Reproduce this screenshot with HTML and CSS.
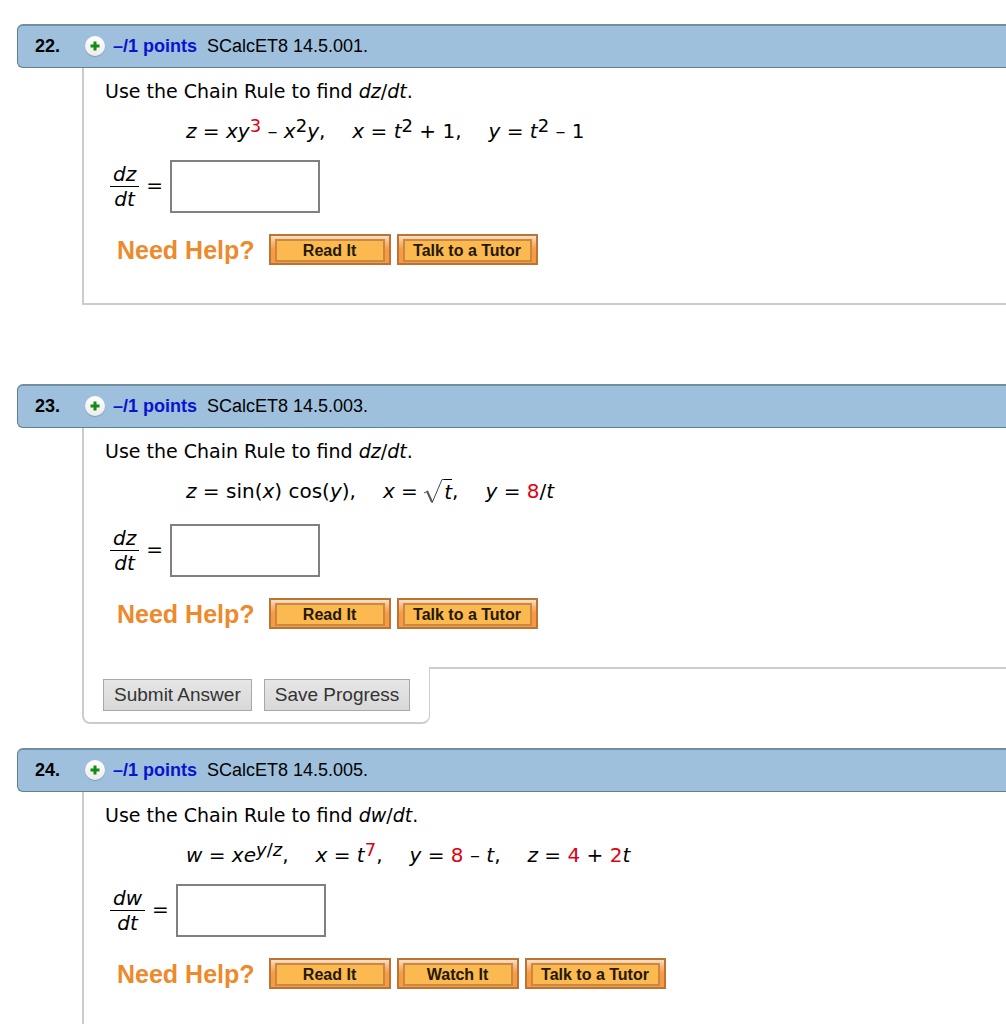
FILE: index.html
```html
<!DOCTYPE html>
<html lang="en">
<head>
  <meta charset="utf-8">
  <title>Homework 14.5</title>
  <link rel="stylesheet" href="styles.css">
</head>
<body>
  <div class="question">
    <div class="bar">
      <span class="number">22.</span>
      <button class="plus" type="button" aria-label="Expand question 22">
        <svg width="20" height="20" viewBox="0 0 20 20"><path d="M10 5.5v9M5.5 10h9" stroke="#168a16" stroke-width="3"/></svg>
      </button>
      <a class="points" href="#">–/1 points</a>
      <span class="source">SCalcET8 14.5.001.</span>
    </div>
    <div class="content">
      <p class="prompt">Use the Chain Rule to find <i>dz</i>/<i>dt</i>.</p>
      <div class="formula">
        <span><i>z</i> = <i>xy</i><sup class="red">3</sup> – <i>x</i><sup>2</sup><i>y</i>,</span>
        <span><i>x</i> = <i>t</i><sup>2</sup> + 1,</span>
        <span><i>y</i> = <i>t</i><sup>2</sup> – 1</span>
      </div>
      <div class="answer">
        <label class="fraction" for="answer22"><i class="top">dz</i><i>dt</i></label>
        <span class="equals">=</span>
        <input id="answer22" type="text">
      </div>
      <div class="help">
        <span class="help-title">Need Help?</span>
        <button class="help-button" type="button"><span>Read It</span></button>
        <button class="help-button wide" type="button"><span>Talk to a Tutor</span></button>
      </div>
    </div>
    <div class="bottom-line"></div>
  </div>

  <div class="question submit-question">
    <div class="bar">
      <span class="number">23.</span>
      <button class="plus" type="button" aria-label="Expand question 23">
        <svg width="20" height="20" viewBox="0 0 20 20"><path d="M10 5.5v9M5.5 10h9" stroke="#168a16" stroke-width="3"/></svg>
      </button>
      <a class="points" href="#">–/1 points</a>
      <span class="source">SCalcET8 14.5.003.</span>
    </div>
    <div class="content">
      <p class="prompt">Use the Chain Rule to find <i>dz</i>/<i>dt</i>.</p>
      <div class="formula tall">
        <span><i>z</i> = sin(<i>x</i>) cos(<i>y</i>),</span>
        <span><i>x</i> = <span class="root"><svg width="20" height="25" viewBox="0 0 20 25"><path d="M0 14l4-2" stroke="#555" fill="none"/><path d="M3 12l5 11" stroke="#555" stroke-width="2" fill="none"/><path d="M8 24L18 .5h2" stroke="#444" fill="none"/></svg><i class="radicand">t</i></span>,</span>
        <span><i>y</i> = <span class="red">8</span>/<i>t</i></span>
      </div>
      <div class="answer">
        <label class="fraction" for="answer23"><i class="top">dz</i><i>dt</i></label>
        <span class="equals">=</span>
        <input id="answer23" type="text">
      </div>
      <div class="help">
        <span class="help-title">Need Help?</span>
        <button class="help-button" type="button"><span>Read It</span></button>
        <button class="help-button wide" type="button"><span>Talk to a Tutor</span></button>
      </div>
    </div>
    <div class="submit-row">
      <div class="tab">
        <button class="submit" type="submit">Submit Answer</button>
        <button class="submit" type="button">Save Progress</button>
      </div>
      <div class="line"></div>
    </div>
  </div>

  <div class="question last">
    <div class="bar">
      <span class="number">24.</span>
      <button class="plus" type="button" aria-label="Expand question 24">
        <svg width="20" height="20" viewBox="0 0 20 20"><path d="M10 5.5v9M5.5 10h9" stroke="#168a16" stroke-width="3"/></svg>
      </button>
      <a class="points" href="#">–/1 points</a>
      <span class="source">SCalcET8 14.5.005.</span>
    </div>
    <div class="content">
      <p class="prompt">Use the Chain Rule to find <i>dw</i>/<i>dt</i>.</p>
      <div class="formula">
        <span><i>w</i> = <i>xe</i><sup><i>y</i>/<i>z</i></sup>,</span>
        <span><i>x</i> = <i>t</i><sup class="red">7</sup>,</span>
        <span><i>y</i> = <span class="red">8</span> – <i>t</i>,</span>
        <span><i>z</i> = <span class="red">4</span> + <span class="red">2</span><i>t</i></span>
      </div>
      <div class="answer">
        <label class="fraction" for="answer24"><i class="top">dw</i><i>dt</i></label>
        <span class="equals">=</span>
        <input id="answer24" type="text">
      </div>
      <div class="help">
        <span class="help-title">Need Help?</span>
        <button class="help-button" type="button"><span>Read It</span></button>
        <button class="help-button" type="button"><span>Watch It</span></button>
        <button class="help-button wide" type="button"><span>Talk to a Tutor</span></button>
      </div>
    </div>
  </div>
</body>
</html>
```
FILE: styles.css
```css
* {
  box-sizing: border-box;
}

body {
  display: flex;
  flex-direction: column;
  min-height: 100vh;
  margin: 0;
  padding: 24px 0 0 17px;
  background: #fff;
  color: #000;
  font-family: Verdana, "DejaVu Sans", sans-serif;
  font-size: 19px;
  line-height: 24px;
}

button {
  padding: 0;
  border: none;
  font-family: "Liberation Sans", Arial, sans-serif;
  cursor: pointer;
}

.question {
  margin-bottom: 79px;
}

.submit-question {
  margin-bottom: 24px;
}

.last {
  display: flex;
  flex-direction: column;
  flex-grow: 1;
  margin-bottom: 0;
}

/* blue title bar */
.bar {
  display: flex;
  align-items: center;
  height: 44px;
  padding: 0 0 2px 17px;
  background: #9ec0dd;
  border: 1px solid #5f7f92;
  border-top: 2px solid #718e9f;
  border-right: none;
  border-radius: 6px 0 0 6px;
  font-family: "Liberation Sans", Arial, sans-serif;
  font-size: 18px;
}

.number {
  width: 50px;
  font-weight: bold;
}

.plus {
  width: 20px;
  height: 20px;
  margin-right: 8px;
  border-radius: 50%;
  background: linear-gradient(#fff, #ececec);
  box-shadow: 0 1px 1px #8099aa;
}

.plus svg {
  display: block;
}

.points {
  margin-right: 10px;
  color: #0a14cc;
  font-weight: bold;
  text-decoration: none;
}

.content {
  flex-grow: 1;
  margin-left: 65px;
  padding: 11px 0 38px 21px;
  border-left: 2px solid #ccc;
}

.prompt {
  margin: 0 0 16px;
}

.formula {
  display: flex;
  gap: 27px;
  height: 24px;
  margin: 0 0 17px 81px;
  font-size: 20px;
  white-space: nowrap;
}

.formula.tall {
  height: 28px;
}

sup {
  font-size: 18px;
  line-height: 0;
  vertical-align: 6px;
}

.red {
  color: #e00012;
}

.root {
  display: inline-flex;
  height: 24px;
  vertical-align: top;
}

.radicand {
  border-top: 1px solid #000;
}

.answer {
  display: flex;
  align-items: center;
  gap: 7px;
  margin: 0 0 21px 5px;
  font-size: 20px;
}

.fraction {
  display: flex;
  flex-direction: column;
  text-align: center;
}

.top {
  padding: 0 3px;
  border-bottom: 1px solid #000;
}

.equals {
  padding-bottom: 4px;
}

.answer input {
  width: 150px;
  height: 53px;
  padding: 4px 8px;
  border: 2px solid #808080;
  font-size: 20px;
}

.help {
  display: flex;
  align-items: center;
  gap: 6px;
  padding-left: 12px;
}

.help-title {
  margin-right: 8px;
  color: #ec8a2d;
  font-family: "Liberation Sans", Arial, sans-serif;
  font-size: 25px;
  font-weight: bold;
}

.help-button {
  width: 122px;
  height: 31px;
  padding: 3px 4px;
  border: 2px solid #b87535;
  background: linear-gradient(#fbe0c8, #fab67a 25%, #f99a42 50%);
  color: #231800;
  font-size: 16px;
  font-weight: bold;
}

.help-button.wide {
  width: 141px;
}

.help-button span {
  display: block;
  padding-top: 1px;
  border: 2px solid #c88a42;
  background: #fbb950;
  line-height: 18px;
}

.bottom-line {
  height: 2px;
  margin-left: 65px;
  background: #ccc;
}

/* submit tab hanging below the question */
.submit-row {
  display: flex;
  margin-left: 65px;
}

.tab {
  display: flex;
  gap: 12px;
  padding: 12px 19px 11px;
  border: 2px solid #ccc;
  border-top: none;
  border-right-width: 1px;
  border-radius: 0 0 8px 8px;
}

.line {
  flex-grow: 1;
  border-top: 2px solid #ccc;
}

.submit {
  height: 32px;
  padding: 0 10px;
  border: 1px solid #a8a8a8;
  background: linear-gradient(#e6e6e6, #d8d8d8);
  color: #333;
  font-size: 19px;
}
```
